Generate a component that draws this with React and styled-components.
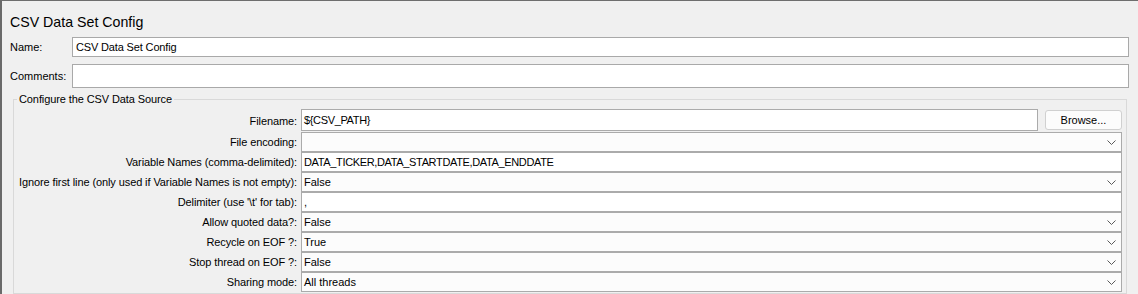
import React from "react";
import styled, { createGlobalStyle } from "styled-components";

const GlobalStyle = createGlobalStyle`
	html, body {
		margin: 0;
		padding: 0;
		background: #f0f0f0;
	}
	body {
		font-family: "Liberation Sans", Arial, sans-serif;
		font-size: 11px;
		color: #000;
	}
`;

const rows = [
	{ label: "Filename:", value: "${CSV_PATH}", kind: "file" },
	{ label: "File encoding:", value: "", kind: "combo" },
	{ label: "Variable Names (comma-delimited):", value: "DATA_TICKER,DATA_STARTDATE,DATA_ENDDATE", kind: "text" },
	{ label: "Ignore first line (only used if Variable Names is not empty):", value: "False", kind: "combo" },
	{ label: "Delimiter (use '\\t' for tab):", value: ",", kind: "text" },
	{ label: "Allow quoted data?:", value: "False", kind: "combo" },
	{ label: "Recycle on EOF ?:", value: "True", kind: "combo" },
	{ label: "Stop thread on EOF ?:", value: "False", kind: "combo" },
	{ label: "Sharing mode:", value: "All threads", kind: "combo" },
];

function Chevron() {
	return (
		<ChevronIcon width="9" height="5" viewBox="0 0 9 5">
			<polyline points="0.5,0.5 4.5,4.5 8.5,0.5" fill="none" stroke="#5a5a5a" strokeWidth="1" />
		</ChevronIcon>
	);
}

function ConfigRow({ label, value, kind }) {
	return (
		<Row $tall={kind === "file"}>
			<RowLabel>{label}</RowLabel>
			{kind === "file" && (
				<FileField>
					<TextBox $height={22}>{value}</TextBox>
					<BrowseButton>Browse...</BrowseButton>
				</FileField>
			)}
			{kind === "text" && <TextBox $height={20}>{value}</TextBox>}
			{kind === "combo" && (
				<Combo>
					<span>{value}</span>
					<Chevron />
				</Combo>
			)}
		</Row>
	);
}

export default function App() {
	return (
		<>
			<GlobalStyle />
			<Panel>
				<Title>CSV Data Set Config</Title>
				<TopRow $height={20}>
					<TopLabel>Name:</TopLabel>
					<TopInput>CSV Data Set Config</TopInput>
				</TopRow>
				<TopRow $height={24} $gap={7}>
					<TopLabel>Comments:</TopLabel>
					<TopInput />
				</TopRow>
				<GroupBox>
					<Legend>Configure the CSV Data Source</Legend>
					{rows.map((r) => (
						<ConfigRow key={r.label} {...r} />
					))}
				</GroupBox>
			</Panel>
		</>
	);
}

const Panel = styled.div`
	width: 1138px;
	height: 294px;
	box-sizing: border-box;
	overflow: hidden;
	border-top: 1px solid #6e6e6e;
	border-left: 2px solid #6a6a6a;
	padding: 11px 9px 0 8px;
	display: flex;
	flex-direction: column;
`;

const Title = styled.div`
	font-size: 14.2px;
	line-height: 20px;
	height: 20px;
	margin-bottom: 5px;
`;

const TopRow = styled.div`
	display: flex;
	align-items: center;
	height: ${(p) => p.$height}px;
	margin-top: ${(p) => p.$gap || 0}px;
	flex-shrink: 0;
`;

const TopLabel = styled.div`
	width: 62px;
	flex-shrink: 0;
`;

const TopInput = styled.div`
	flex: 1;
	height: 100%;
	box-sizing: border-box;
	background: #fff;
	border: 1px solid #a9a9a9;
	padding: 0 3px;
	display: flex;
	align-items: center;
	letter-spacing: -0.15px;
`;

const GroupBox = styled.div`
	position: relative;
	margin: 11px 2px 0 3px;
	border: 1px solid #d9d9d9;
	padding: 9px 4px 0 3px;
	flex: 1;
	display: flex;
	flex-direction: column;
`;

const Legend = styled.span`
	position: absolute;
	top: -8px;
	left: 3px;
	padding: 0 2px;
	background: #f0f0f0;
	line-height: 14px;
	letter-spacing: -0.1px;
`;

const Row = styled.div`
	display: flex;
	align-items: ${(p) => (p.$tall ? "flex-start" : "stretch")};
	height: ${(p) => (p.$tall ? 23 : 20)}px;
	flex-shrink: 0;
`;

const RowLabel = styled.div`
	width: 284px;
	flex-shrink: 0;
	box-sizing: border-box;
	padding-right: 4px;
	text-align: right;
	white-space: nowrap;
	letter-spacing: -0.1px;
	display: flex;
	align-items: center;
	justify-content: flex-end;
	height: 20px;
	align-self: center;
`;

const FileField = styled.div`
	flex: 1;
	display: flex;
	gap: 7px;
	align-items: center;
	height: 22px;
`;

const TextBox = styled.div`
	flex: 1;
	height: ${(p) => p.$height}px;
	box-sizing: border-box;
	background: #fff;
	border: 1px solid #ababab;
	padding: 0 2px;
	display: flex;
	align-items: center;
	white-space: nowrap;
	letter-spacing: -0.35px;
`;

const BrowseButton = styled.div`
	width: 77px;
	height: 20px;
	box-sizing: border-box;
	border: 1px solid #d0d0d0;
	border-radius: 3px;
	background: #fcfcfc;
	display: flex;
	align-items: center;
	justify-content: center;
`;

const Combo = styled.div`
	flex: 1;
	height: 20px;
	box-sizing: border-box;
	background: #fcfcfc;
	border: 1px solid #ababab;
	padding: 0 5px 0 2px;
	display: flex;
	align-items: center;
	justify-content: space-between;
`;

const ChevronIcon = styled.svg`
	display: block;
`;
